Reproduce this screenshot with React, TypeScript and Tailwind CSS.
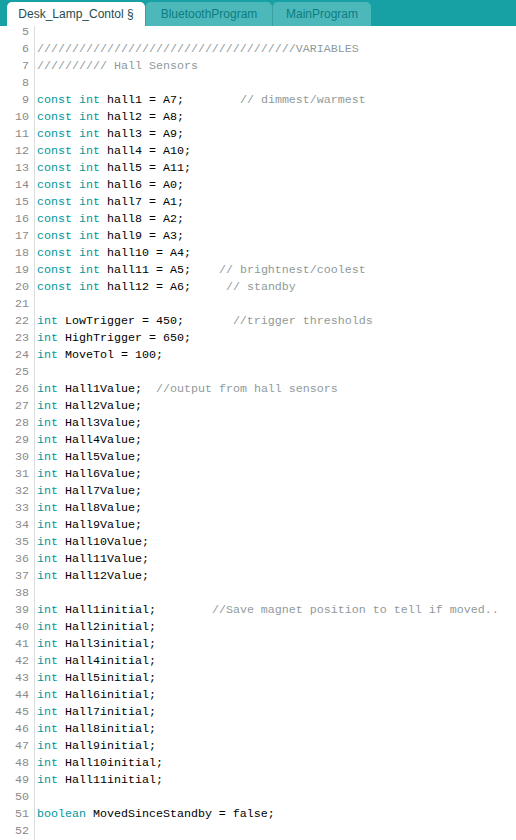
import React from "react";

type Seg = { t: string; c?: "k" | "c" };

const K = (t: string): Seg => ({ t, c: "k" });
const C = (t: string): Seg => ({ t, c: "c" });
const T = (t: string): Seg => ({ t });

const lines: Seg[][] = [];
lines.push([]); // 5
lines.push([C("/////////////////////////////////////VARIABLES")]); // 6
lines.push([C("////////// Hall Sensors")]); // 7
lines.push([]); // 8
const pins = ["A7", "A8", "A9", "A10", "A11", "A0", "A1", "A2", "A3", "A4", "A5", "A6"];
pins.forEach((p, i) => {
  const row: Seg[] = [K("const"), T(" "), K("int"), T(` hall${i + 1} = ${p};`)];
  if (i === 0) row.push(T("        "), C("// dimmest/warmest"));
  if (i === 10) row.push(T("    "), C("// brightnest/coolest"));
  if (i === 11) row.push(T("     "), C("// standby"));
  lines.push(row);
});
lines.push([]); // 21
lines.push([K("int"), T(" LowTrigger = 450;       "), C("//trigger thresholds")]);
lines.push([K("int"), T(" HighTrigger = 650;")]);
lines.push([K("int"), T(" MoveTol = 100;")]);
lines.push([]); // 25
for (let i = 1; i <= 12; i++) {
  const row: Seg[] = [K("int"), T(` Hall${i}Value;`)];
  if (i === 1) row.push(T("  "), C("//output from hall sensors"));
  lines.push(row);
}
lines.push([]); // 38
for (let i = 1; i <= 11; i++) {
  const row: Seg[] = [K("int"), T(` Hall${i}initial;`)];
  if (i === 1) row.push(T("        "), C("//Save magnet position to tell if moved.."));
  lines.push(row);
}
lines.push([]); // 50
lines.push([K("boolean"), T(" MovedSinceStandby = false;")]);
lines.push([]); // 52

export default function App() {
  return (
    <div className="w-[516px] h-[840px] overflow-hidden bg-white flex flex-col">
      <div
        className="h-[26px] shrink-0 bg-[#17A1A5] flex items-end pl-[7px] relative z-10"
        style={{ fontFamily: '"Liberation Sans", Arial, sans-serif' }}
      >
        <div className="w-[138px] h-[24px] bg-white rounded-t-[5px] flex items-center justify-center text-[12px] text-[#1e4d4f]">
          Desk_Lamp_Contol §
        </div>
        <div className="w-[127px] h-[24px] bg-[#4DB8BA] rounded-t-[5px] border-l border-[#3a9fa2] flex items-center justify-center text-[12px] text-[#0b7e82]">
          BluetoothProgram
        </div>
        <div className="w-[99px] h-[24px] bg-[#4DB8BA] rounded-t-[5px] border-l border-[#3a9fa2] flex items-center justify-center text-[12px] text-[#0b7e82]">
          MainProgram
        </div>
      </div>
      <div
        className="flex -mt-[2px] text-[11.67px] leading-[17px] whitespace-pre"
        style={{ fontFamily: '"Liberation Mono", "Courier New", monospace' }}
      >
        <div className="w-[35px] shrink-0 border-r border-[#dcdcdc] text-right pr-[5px] text-[#8a8a8a]">
          {lines.map((_, i) => (
            <div key={i} className="h-[17px]">
              {i + 5}
            </div>
          ))}
        </div>
        <div className="pl-[2px] text-[#000000]">
          {lines.map((row, i) => (
            <div key={i} className="h-[17px]">
              {row.map((s, j) => (
                <span
                  key={j}
                  className={
                    s.c === "k" ? "text-[#00979C]" : s.c === "c" ? "text-[#8f9a9b]" : ""
                  }
                >
                  {s.t}
                </span>
              ))}
            </div>
          ))}
        </div>
      </div>
    </div>
  );
}
